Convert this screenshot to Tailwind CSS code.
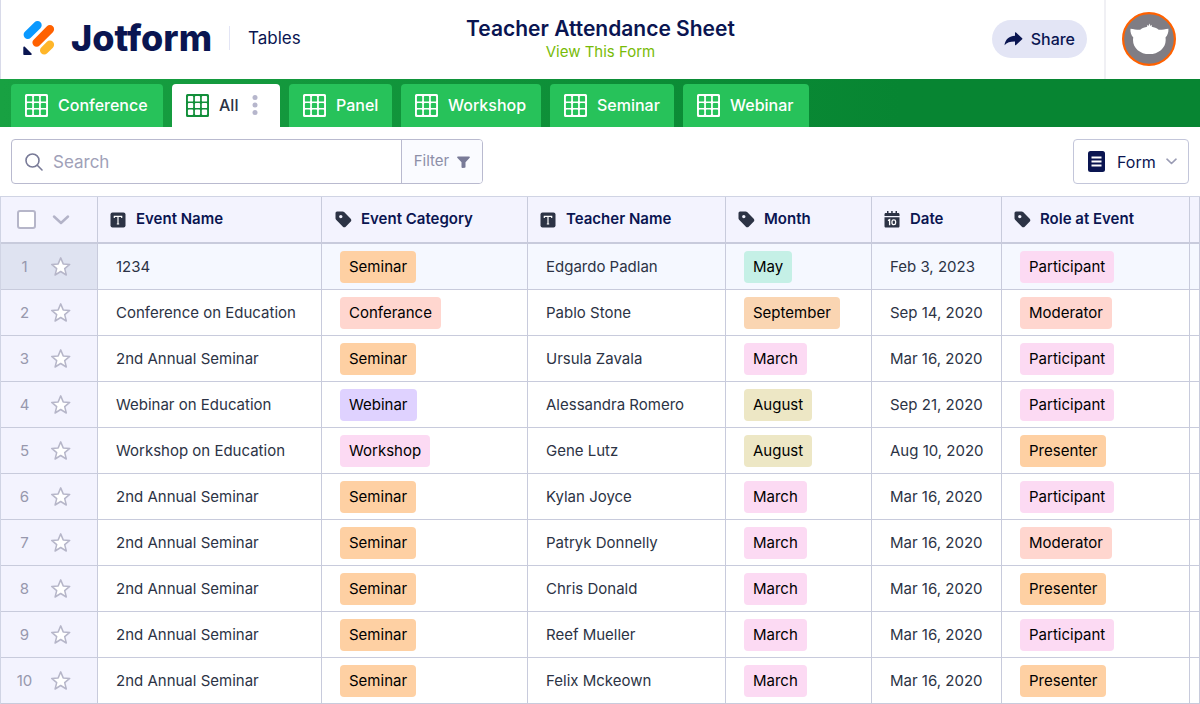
<!DOCTYPE html>
<html lang="en">
<head>
<meta charset="utf-8">
<meta name="viewport" content="width=device-width, initial-scale=1">
<title>Teacher Attendance Sheet</title>
<script src="https://cdn.jsdelivr.net/npm/@tailwindcss/browser@4"></script>
</head>
<body class="bg-white font-['Inter',sans-serif] text-base text-[#2c3345]">
<svg class="hidden" aria-hidden="true">
  <symbol id="grid" viewBox="0 0 23 23"><path fill="currentColor" fill-rule="evenodd" d="M1.500 0h20a1.500 1.500 0 0 1 1.500 1.500v20a1.500 1.500 0 0 1-1.500 1.500h-20A1.500 1.500 0 0 1 0 21.500v-20A1.500 1.500 0 0 1 1.500 0zM1.900 3v3.700a.9.9 0 0 0 .9.9h3.500a.9.9 0 0 0 .9-.9V3a.9.9 0 0 0-.9-.9H2.800a.9.9 0 0 0-.9.9zM8.900 3v3.700a.9.9 0 0 0 .9.9h3.400a.9.9 0 0 0 .9-.9V3a.9.9 0 0 0-.9-.9H9.800a.9.9 0 0 0-.9.9zM15.800 3v3.700a.9.9 0 0 0 .9.9h3.500a.9.9 0 0 0 .9-.9V3a.9.9 0 0 0-.9-.9h-3.500a.9.9 0 0 0-.9.9zM1.900 9.900v3.300a.9.9 0 0 0 .9.9h3.500a.9.9 0 0 0 .9-.9V9.900a.9.9 0 0 0-.9-.9H2.800a.9.9 0 0 0-.9.9zM8.900 9.900v3.300a.9.9 0 0 0 .9.9h3.400a.9.9 0 0 0 .9-.9V9.900a.9.9 0 0 0-.9-.9H9.800a.9.9 0 0 0-.9.9zM15.800 9.900v3.300a.9.9 0 0 0 .9.9h3.500a.9.9 0 0 0 .9-.9V9.900a.9.9 0 0 0-.9-.9h-3.500a.9.9 0 0 0-.9.9zM1.900 16.500V20a.9.9 0 0 0 .9.9h3.500a.9.9 0 0 0 .9-.9v-3.500a.9.9 0 0 0-.9-.9H2.800a.9.9 0 0 0-.9.9zM8.900 16.500V20a.9.9 0 0 0 .9.900h3.400a.9.9 0 0 0 .9-.9v-3.500a.9.9 0 0 0-.9-.9H9.800a.9.9 0 0 0-.9.9zM15.800 16.500V20a.9.9 0 0 0 .9.900h3.500a.9.9 0 0 0 .9-.9v-3.500a.9.9 0 0 0-.9-.9h-3.500a.9.9 0 0 0-.9.9z"/></symbol>
  <symbol id="short-text" viewBox="0 0 16 16"><rect x=".5" y=".5" width="15" height="15" rx="2" fill="#2c3345"/><path d="M4.300 6V4.400h7.400V6M8 4.400v7.600M6.800 12h2.400" fill="none" stroke="#fff" stroke-width="1.200"/></symbol>
  <symbol id="tag" viewBox="0 0 17 17"><path fill="#2c3345" fill-rule="evenodd" d="M.5 2v5.300c0 .6.200 1.100.6 1.500l6.800 6.900c.8.800 2 .8 2.800 0l5.100-5.200c.7-.8.700-2-.1-2.800L9.100 1.100C8.700.7 8.200.5 7.600.5H2A1.500 1.500 0 0 0 .5 2zm5.300 5.300a1.700 1.700 0 1 1 0-3.400 1.700 1.700 0 0 1 0 3.400z"/></symbol>
  <symbol id="calendar" viewBox="0 0 16 17"><path fill="#2c3345" d="M3 0h1.500v2H7.200V0h1.500v2h2.800V0H13v2h1.200c.8 0 1.300.6 1.300 1.300V5H.5V3.300C.5 2.600 1 2 1.800 2H3zM.5 6.300h15v8.900c0 .7-.6 1.300-1.300 1.300H1.800c-.7 0-1.300-.6-1.300-1.300z"/><path d="M4 9.600l1.600-1v5.600" fill="none" stroke="#fff" stroke-width="1.300"/><rect x="8" y="8.900" width="3.600" height="4.800" rx="1.700" fill="none" stroke="#fff" stroke-width="1.300"/></symbol>
  <symbol id="star" viewBox="0 0 22 22"><path fill="#fff" stroke="#b6b6c9" stroke-width="1.500" stroke-linejoin="round" d="M10.700 1.900l2.500 6 6.500.5-5 4.200 1.600 6.400-5.600-3.500-5.600 3.500 1.600-6.400-5-4.200 6.500-.5z"/></symbol>
</svg>

<header class="grid h-[79px] grid-cols-[1fr_auto_1fr] items-center border-l border-[#d8dae9]">
  <div class="flex items-center pb-[3px] pl-[22px]">
    <a href="#" class="flex items-center gap-4" aria-label="Jotform home">
      <svg class="h-[35px] w-8" viewBox="0 0 32 35" fill="none" stroke-linecap="round">
        <path d="M4.800 13.700l9.700-9.500" stroke="#0a99ff" stroke-width="8.400"/>
        <path d="M13.600 21.600L26.900 8.300" stroke="#ff6100" stroke-width="8.400"/>
        <path d="M21.200 29.400l5.700-5.700" stroke="#ffb629" stroke-width="8.400"/>
        <path d="M.3 26.400c0-.8.900-1.200 1.500-.6l6.700 6.700c.6.600.200 1.500-.6 1.500H1.300c-.6 0-1-.4-1-1z" fill="#0a1551"/>
      </svg>
      <span class="text-[36px] font-extrabold leading-9 text-[#0a1551]">Jotform</span>
    </a>
    <span class="ml-[17px] border-l border-[#e3e5f5] pl-[18px] text-[17px] leading-6 text-[#0a1551]">Tables</span>
  </div>
  <div class="text-center">
    <h1 class="text-[21px] font-semibold leading-6 text-[#0a1551]">Teacher Attendance Sheet</h1>
    <a href="#" class="block text-[15px] leading-[22px] text-[#78bb07]">View This Form</a>
  </div>
  <div class="flex h-full items-center justify-end">
    <button class="mr-[17px] mb-[2px] flex h-[38px] items-center gap-2 rounded-full bg-[#e3e5f5] px-3 font-medium text-[#0a1551]">
      <svg class="h-[14px] w-[19px]" viewBox="0 0 19 14"><path fill="#0a1551" d="M11 .8v3C5.500 4 1.300 7 .5 13.300 3 10.400 6.500 9.400 11 9.500v3.200c0 .5.600.8 1 .4l6.200-5.800c.3-.3.300-.7 0-1L12 .4c-.4-.4-1-.1-1 .4z"/></svg>
      Share
    </button>
    <div class="flex h-full items-center border-l-2 border-[#f0f0f4] pr-6 pb-[2px] pl-4">
      <button aria-label="Account" class="size-[54px]">
        <svg viewBox="0 0 54 54"><circle cx="27" cy="27" r="25.900" fill="#7f7d84" stroke="#ff6100" stroke-width="2.200"/><path fill="#fff" d="M8.500 16.700c3.500.3 7.300 1.400 9.700 1 2.200-1.600 4.500-2.500 6.900-2.900l.1-2 1.200 1.100 1-2.300 1.100 2.300 1.200-1.100.1 2c2.400.4 4.700 1.300 6.900 2.900 2.400.4 6.200-.7 9.700-1 .3 3.500-.8 6.400-2.900 8.800.1.800.2 1.600.2 2.400 0 8.200-7.300 14.200-16.400 14.200S11 36.100 11 27.900c0-.8.100-1.600.3-2.400-2.100-2.400-3.200-5.300-2.800-8.800z"/></svg>
      </button>
    </div>
  </div>
</header>

<nav aria-label="Tabs" class="flex h-12 items-end gap-[9px] bg-linear-to-r from-[#18a142] to-[#078532] to-75% px-[11px] font-medium text-white">
  <button class="flex h-[43px] w-[152px] items-center gap-[10px] rounded-t bg-[#27c25a] pb-px pl-[14px]"><svg class="size-[23px]"><use href="#grid"/></svg>Conference</button>
  <button class="flex h-[43px] w-[108px] items-center gap-[10px] rounded-t bg-white pb-px pl-[14px] text-[#2c3345]"><svg class="size-[23px] text-[#128f3a]"><use href="#grid"/></svg>All
    <svg class="ml-1 h-5 w-[6px]" viewBox="0 0 6 20" fill="#b6b6cc"><circle cx="3" cy="2.500" r="2.500"/><circle cx="3" cy="10" r="2.500"/><circle cx="3" cy="17.500" r="2.500"/></svg></button>
  <button class="flex h-[43px] w-[103px] items-center gap-[10px] rounded-t bg-[#27c25a] pb-px pl-[14px]"><svg class="size-[23px]"><use href="#grid"/></svg>Panel</button>
  <button class="flex h-[43px] w-[140px] items-center gap-[10px] rounded-t bg-[#27c25a] pb-px pl-[14px]"><svg class="size-[23px]"><use href="#grid"/></svg>Workshop</button>
  <button class="flex h-[43px] w-[124px] items-center gap-[10px] rounded-t bg-[#27c25a] pb-px pl-[14px]"><svg class="size-[23px]"><use href="#grid"/></svg>Seminar</button>
  <button class="flex h-[43px] w-[126px] items-center gap-[10px] rounded-t bg-[#27c25a] pb-px pl-[14px]"><svg class="size-[23px]"><use href="#grid"/></svg>Webinar</button>
</nav>

<main>
  <div class="flex justify-between px-[11px] py-3">
    <form class="flex h-[45px] w-[472px] overflow-hidden rounded border border-[#b9bacf]">
      <label for="search" class="flex items-center pl-[13px]">
        <svg class="size-[18px]" viewBox="0 0 18 18" fill="none" stroke="#797b98" stroke-width="1.600" stroke-linecap="round"><circle cx="7.500" cy="7.500" r="6.500"/><path d="M12.300 12.300l4.700 4.700"/></svg></label>
      <input id="search" type="text" aria-label="Search" placeholder="Search" class="min-w-0 flex-1 pt-[2px] pl-[10px] text-[17px] outline-none placeholder:text-[#a0a1b8]">
      <button type="button" class="flex w-[81px] items-center justify-center gap-2 border-l border-[#b9bacf] bg-[#fafbff] text-[15px] text-[#8d8fa8]">Filter
        <svg class="h-3 w-[13px]" viewBox="0 0 13 12"><path fill="#797b98" d="M.9.500h11.200c.7 0 1 .8.6 1.300L8.500 6.300V11c0 .5-.3.700-.7.800l-2.300.1c-.6 0-1-.3-1-.9V6.300L.3 1.800C-.1 1.300.2.500.9.500z"/></svg></button>
    </form>
    <button class="flex h-[45px] w-[116px] items-center rounded border border-[#c3c6da] pl-[14px] text-[#0a1551]">
      <svg class="mr-3 h-[21px] w-[17px]" viewBox="0 0 17 21"><rect width="17" height="21" rx="2.500" fill="#0a1551"/><path d="M3.500 6.500h10M3.500 10.500h10M3.500 14.500h10" stroke="#fff" stroke-width="1.800"/></svg>
      Form
      <svg class="ml-[10px] h-[7px] w-[11px]" viewBox="0 0 11 7" fill="none" stroke="#9a9cb4" stroke-width="1.600" stroke-linecap="round" stroke-linejoin="round"><path d="M1 1.200l4.500 4.300L10 1.200"/></svg>
    </button>
  </div>

  <table class="w-full table-fixed border-separate border-spacing-0 border-t border-l border-[#d0d4e4] text-left">
    <colgroup><col class="w-[97px]"><col class="w-[224px]"><col class="w-[206px]"><col class="w-[198px]"><col class="w-[146px]"><col class="w-[130px]"><col class="w-[188px]"><col></colgroup>
    <thead class="bg-[#f3f3fe] text-[15px] text-[#0a1551]">
      <tr class="h-[47px] *:border-r *:border-b-2 *:border-[#c8cbdc] *:p-0 *:font-semibold">
        <th><div class="flex items-center gap-4 pl-4"><input type="checkbox" aria-label="Select all" class="size-[19px] appearance-none rounded-[3px] border-2 border-[#b6b6c9] bg-white"><button aria-label="Row options"><svg class="h-[10px] w-[18px]" viewBox="0 0 18 10" fill="none" stroke="#b3b3c8" stroke-width="2.400" stroke-linecap="round" stroke-linejoin="round"><path d="M2 1.500l7 6.500 7-6.500"/></svg></button></div></th>
        <th><div class="flex items-center gap-[10px] pl-3"><svg class="size-4"><use href="#short-text"/></svg>Event Name</div></th>
        <th><div class="flex items-center gap-[9px] pl-[13px]"><svg class="size-[17px]"><use href="#tag"/></svg>Event Category</div></th>
        <th><div class="flex items-center gap-[10px] pl-3"><svg class="size-4"><use href="#short-text"/></svg>Teacher Name</div></th>
        <th><div class="flex items-center gap-[9px] pl-3"><svg class="size-[17px]"><use href="#tag"/></svg>Month</div></th>
        <th><div class="flex items-center gap-[10px] pl-3"><svg class="h-[17px] w-4"><use href="#calendar"/></svg>Date</div></th>
        <th><div class="flex items-center gap-[9px] pl-3"><svg class="size-[17px]"><use href="#tag"/></svg>Role at Event</div></th>
        <th></th>
      </tr>
    </thead>
    <tbody id="rows" class="text-[15px]"></tbody>
  </table>
</main>

<script>
  const colours = {
    Seminar: 'bg-[#fed0a3]', Conferance: 'bg-[#ffd6cf]', Webinar: 'bg-[#dfd2ff]', Workshop: 'bg-[#fcdaf3]',
    May: 'bg-[#c5f0e6]', September: 'bg-[#fad5b2]', March: 'bg-[#fcdaf3]', August: 'bg-[#ede7c5]',
    Participant: 'bg-[#fcdaf3]', Moderator: 'bg-[#ffd6cf]', Presenter: 'bg-[#fed0a3]'
  };
  const rows = [
    ['1234', 'Seminar', 'Edgardo Padlan', 'May', 'Feb 3, 2023', 'Participant'],
    ['Conference on Education', 'Conferance', 'Pablo Stone', 'September', 'Sep 14, 2020', 'Moderator'],
    ['2nd Annual Seminar', 'Seminar', 'Ursula Zavala', 'March', 'Mar 16, 2020', 'Participant'],
    ['Webinar on Education', 'Webinar', 'Alessandra Romero', 'August', 'Sep 21, 2020', 'Participant'],
    ['Workshop on Education', 'Workshop', 'Gene Lutz', 'August', 'Aug 10, 2020', 'Presenter'],
    ['2nd Annual Seminar', 'Seminar', 'Kylan Joyce', 'March', 'Mar 16, 2020', 'Participant'],
    ['2nd Annual Seminar', 'Seminar', 'Patryk Donnelly', 'March', 'Mar 16, 2020', 'Moderator'],
    ['2nd Annual Seminar', 'Seminar', 'Chris Donald', 'March', 'Mar 16, 2020', 'Presenter'],
    ['2nd Annual Seminar', 'Seminar', 'Reef Mueller', 'March', 'Mar 16, 2020', 'Participant'],
    ['2nd Annual Seminar', 'Seminar', 'Felix Mckeown', 'March', 'Mar 16, 2020', 'Presenter']
  ];
  const pill = t => `<span class="block w-fit rounded px-[9px] leading-8 text-black ${colours[t]}">${t}</span>`;
  const text = t => `<span class="block leading-8">${t}</span>`;
  document.getElementById('rows').innerHTML = rows.map((r, i) => `
    <tr class="h-[46px] *:border-r *:border-b *:border-[#c8cbdc] *:py-0 *:pr-0 *:pl-[18px] ${i === 0 ? 'bg-[#f5f8ff]' : 'bg-white'}">
      <td class="${i === 0 ? 'bg-[#dfe3f1]' : 'bg-[#f3f3fe]'}"><div class="-ml-[6px] flex items-center gap-[14px] leading-8 text-[#9798ad]"><span class="w-[23px] text-center">${i + 1}</span><button aria-label="Star row ${i + 1}"><svg class="block size-[22px]"><use href="#star"/></svg></button></div></td>
      <td>${text(r[0])}</td><td>${pill(r[1])}</td><td>${text(r[2])}</td><td>${pill(r[3])}</td><td>${text(r[4])}</td><td>${pill(r[5])}</td><td></td>
    </tr>`).join('');
</script>
</body>
</html>
